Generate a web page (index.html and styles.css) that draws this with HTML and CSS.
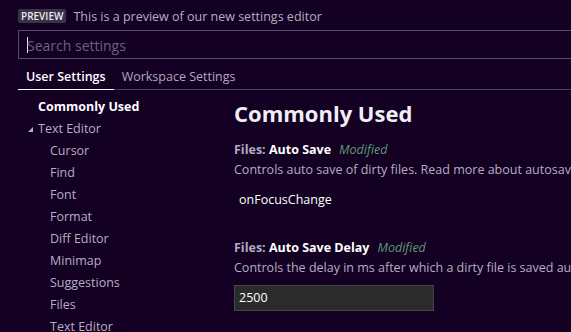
FILE: index.html
```html
<!DOCTYPE html>
<html>
<head>
<meta charset="utf-8">
<link rel="stylesheet" href="styles.css">
</head>
<body>
<div class="page">
  <div class="preview-row">
    <span class="badge">PREVIEW</span>
    <span class="preview-text">This is a preview of our new settings editor</span>
  </div>
  <div class="search">
    <span class="caret"></span>
    <span class="placeholder">Search settings</span>
  </div>
  <div class="tabs">
    <div class="tab active">User Settings</div>
    <div class="tab">Workspace Settings</div>
  </div>
  <div class="body">
    <div class="tree">
      <div class="node top">Commonly Used</div>
      <div class="node group"><span class="twist"></span>Text Editor</div>
      <div class="node child">Cursor</div>
      <div class="node child">Find</div>
      <div class="node child">Font</div>
      <div class="node child">Format</div>
      <div class="node child">Diff Editor</div>
      <div class="node child">Minimap</div>
      <div class="node child">Suggestions</div>
      <div class="node child">Files</div>
      <div class="node child">Text Editor</div>
    </div>
    <div class="content">
      <h1 class="heading">Commonly Used</h1>
      <div class="setting">
        <div class="label"><span class="cat">Files: </span><span class="name">Auto Save</span><span class="mod">Modified</span></div>
        <div class="desc">Controls auto save of dirty files. Read more about autosave here.</div>
        <div class="select-value">onFocusChange</div>
      </div>
      <div class="setting second">
        <div class="label"><span class="cat">Files: </span><span class="name">Auto Save Delay</span><span class="mod">Modified</span></div>
        <div class="desc">Controls the delay in ms after which a dirty file is saved automatically.</div>
        <div class="input">2500</div>
      </div>
    </div>
  </div>
</div>
</body>
</html>
```
FILE: styles.css
```css
html, body {
  margin: 0;
  padding: 0;
  background: #130022;
  overflow: hidden;
}
.page {
  width: 571px;
  height: 332px;
  font-family: "Open Sans", "Noto Sans", sans-serif;
  color: #c3bccb;
  padding-left: 18px;
  box-sizing: border-box;
  overflow: hidden;
}
.preview-row {
  display: flex;
  align-items: center;
  height: 32px;
  white-space: nowrap;
}
.badge {
  background: #3a3347;
  color: #ece8f0;
  font-size: 10px;
  font-weight: 600;
  padding: 1px 3px;
  border-radius: 2px;
  line-height: 12px;
}
.preview-text {
  margin-left: 7px;
  font-size: 12.5px;
  color: #b7adc3;
}
.search {
  height: 29px;
  border: 1px solid #5b4d6b;
  border-right: none;
  box-sizing: border-box;
  margin-top: -2px;
  display: flex;
  align-items: center;
  padding-left: 8px;
  padding-top: 1px;
  white-space: nowrap;
}
.caret {
  width: 1px;
  height: 16px;
  background: #e8e0f0;
}
.placeholder {
  font-size: 14px;
  color: #6d6279;
  margin-left: -1px;
}
.tabs {
  display: flex;
  height: 30px;
  border-bottom: 1px solid #4b4058;
  white-space: nowrap;
}
.tab {
  font-size: 12.5px;
  line-height: 35px;
  height: 30px;
  padding: 0 8px;
  color: #b3a8c0;
}
.tab.active {
  color: #ffffff;
  font-weight: 600;
  border-bottom: 1px solid #ffffff;
  margin-bottom: -1px;
}
.body {
  display: flex;
}
.tree {
  width: 216px;
  flex: none;
  padding-top: 6px;
  white-space: nowrap;
}
.node {
  height: 22px;
  line-height: 22px;
  font-size: 12.5px;
  color: #b8aec4;
}
.node.top {
  padding-left: 20px;
  color: #ffffff;
  font-weight: 700;
}
.node.group {
  display: flex;
  align-items: center;
  padding-left: 10px;
}
.twist {
  width: 0;
  height: 0;
  border-left: 5px solid transparent;
  border-bottom: 5px solid #b8aec4;
  margin-right: 5px;
  margin-top: 1px;
}
.node.child {
  padding-left: 32px;
}
.content {
  white-space: nowrap;
  padding-top: 8px;
}
.heading {
  margin: 0;
  font-size: 22px;
  font-weight: 700;
  color: #f1eef5;
  line-height: 30px;
}
.setting {
  margin-top: 13px;
}
.setting.second {
  margin-top: 28px;
}
.label {
  font-size: 12.5px;
  font-weight: 700;
  line-height: 18px;
}
.cat {
  color: #b5abc1;
}
.name {
  color: #ffffff;
}
.mod {
  font-weight: 400;
  font-style: italic;
  color: #5f9a73;
  margin-left: 8px;
}
.desc {
  font-size: 12.5px;
  line-height: 22px;
  color: #b7adc3;
}
.select-value {
  font-size: 12.5px;
  color: #ffffff;
  line-height: 22px;
  margin-top: 8px;
  padding-left: 5px;
}
.input {
  margin-top: 6px;
  width: 200px;
  height: 26px;
  box-sizing: border-box;
  background: #2b2b2b;
  border: 1px solid #454545;
  color: #ffffff;
  font-size: 12.5px;
  line-height: 24px;
  padding-left: 4px;
}
```
